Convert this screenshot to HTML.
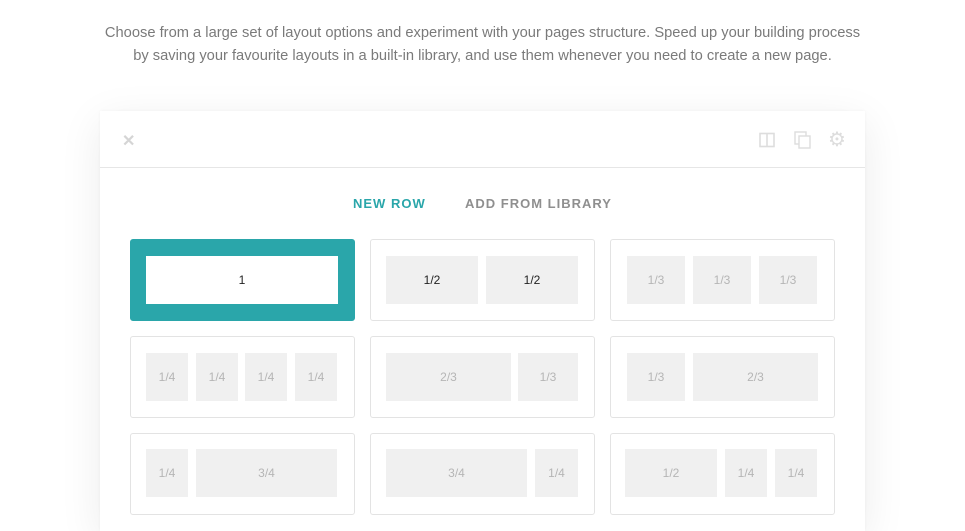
<!DOCTYPE html>
<html><head><meta charset="utf-8"><style>
*{margin:0;padding:0;box-sizing:border-box}
body{width:965px;height:500px;background:#fff;position:relative;overflow:hidden;font-family:"Liberation Sans",sans-serif}
.p{position:absolute;left:0;width:965px;text-align:center;color:#7a7a7a;font-size:14.7px;line-height:23px;top:22px}
.panel{position:absolute;left:100px;top:111px;width:765px;height:420px;background:#fff;box-shadow:0 10px 40px rgba(0,0,0,.08),0 0 3px rgba(0,0,0,.04)}
.hdr{position:absolute;left:100px;top:167px;width:765px;height:1px;background:#e6e6e6}
.tab{position:absolute;top:196px;font-size:13px;font-weight:bold;letter-spacing:1px}
.c{position:absolute;width:225px;height:82px;border:1px solid #e3e3e3;border-radius:3px;background:#fff}
.b{position:absolute;top:256px;height:48px;background:#f0f0f0;color:#b5b5b5;font-size:12px;display:flex;align-items:center;justify-content:center}
</style></head><body>
<div class="p">Choose from a large set of layout options and experiment with your pages structure. Speed up your building process<br>by saving your favourite layouts in a built-in library, and use them whenever you need to create a new page.</div>
<div class="panel"></div>
<div class="hdr"></div>
<div style="position:absolute;left:122px;top:131px;color:#d5d5d5;font-size:16px;font-weight:bold">✕</div>
<svg style="position:absolute;left:759px;top:132px" width="16" height="16"><rect x="1" y="1.5" width="14" height="13" fill="none" stroke="#ddd" stroke-width="1.6"/><line x1="8" y1="1.5" x2="8" y2="14.5" stroke="#ddd" stroke-width="1.6"/></svg>
<svg style="position:absolute;left:794px;top:131px" width="18" height="19"><rect x="1" y="1" width="11" height="12" fill="none" stroke="#ddd" stroke-width="1.4"/><rect x="5" y="5" width="11" height="12" fill="#fff" stroke="#ddd" stroke-width="1.4"/></svg>
<div style="position:absolute;left:828px;top:127px;color:#ddd;font-size:20px">⚙</div>
<div class="tab" style="left:353px;color:#2aa6aa">NEW ROW</div>
<div class="tab" style="left:465px;color:#8f8f8f">ADD FROM LIBRARY</div>

<div class="c" style="left:130px;top:239px;background:#2aa6aa;border-color:#2aa6aa"></div>
<div class="c" style="left:370px;top:239px"></div>
<div class="c" style="left:610px;top:239px"></div>
<div class="c" style="left:130px;top:336px"></div>
<div class="c" style="left:370px;top:336px"></div>
<div class="c" style="left:610px;top:336px"></div>
<div class="c" style="left:130px;top:433px"></div>
<div class="c" style="left:370px;top:433px"></div>
<div class="c" style="left:610px;top:433px"></div>

<div class="b" style="left:146px;width:192px;background:#fff;color:#222">1</div>
<div class="b" style="left:386px;width:92px;color:#222">1/2</div>
<div class="b" style="left:486px;width:92px;color:#222">1/2</div>
<div class="b" style="left:627px;width:58px">1/3</div>
<div class="b" style="left:693px;width:58px">1/3</div>
<div class="b" style="left:759px;width:58px">1/3</div>

<div class="b" style="top:353px;left:146px;width:42px">1/4</div>
<div class="b" style="top:353px;left:196px;width:42px">1/4</div>
<div class="b" style="top:353px;left:245px;width:42px">1/4</div>
<div class="b" style="top:353px;left:295px;width:42px">1/4</div>
<div class="b" style="top:353px;left:386px;width:125px">2/3</div>
<div class="b" style="top:353px;left:518px;width:60px">1/3</div>
<div class="b" style="top:353px;left:627px;width:58px">1/3</div>
<div class="b" style="top:353px;left:693px;width:125px">2/3</div>

<div class="b" style="top:449px;left:146px;width:42px">1/4</div>
<div class="b" style="top:449px;left:196px;width:141px">3/4</div>
<div class="b" style="top:449px;left:386px;width:141px">3/4</div>
<div class="b" style="top:449px;left:535px;width:43px">1/4</div>
<div class="b" style="top:449px;left:625px;width:92px">1/2</div>
<div class="b" style="top:449px;left:725px;width:42px">1/4</div>
<div class="b" style="top:449px;left:775px;width:42px">1/4</div>
</body></html>
